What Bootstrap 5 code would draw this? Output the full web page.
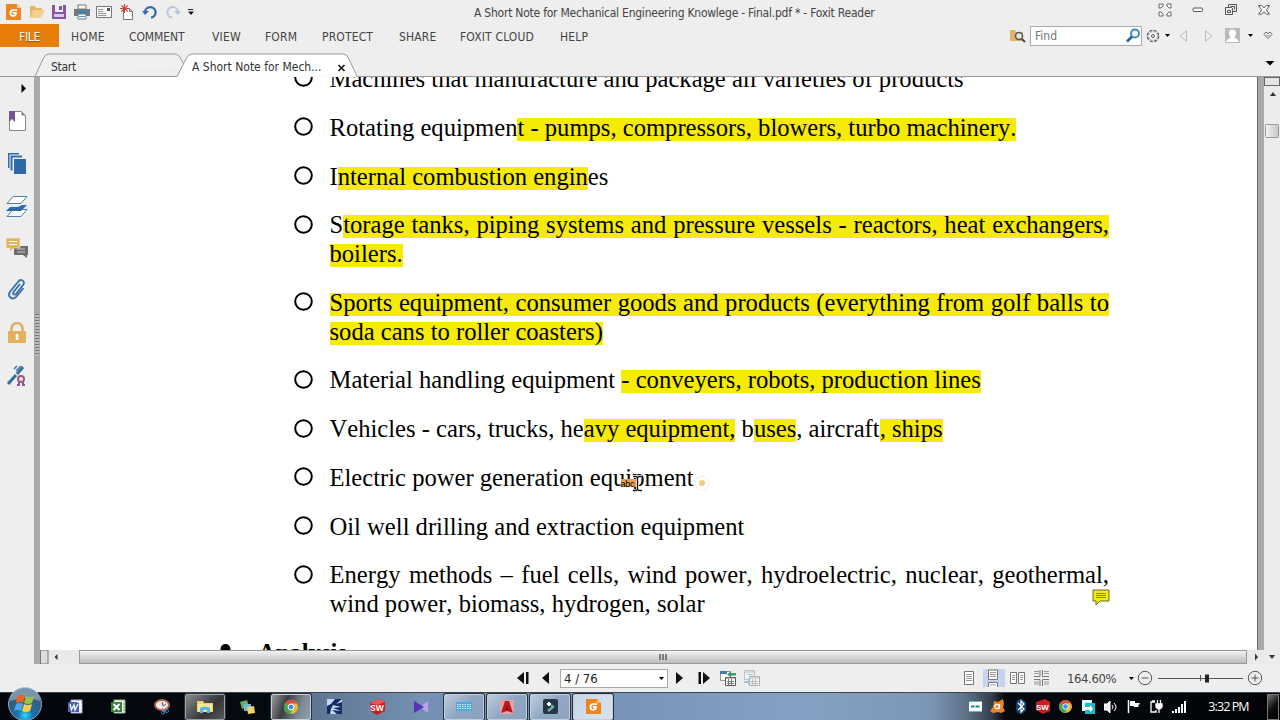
<!DOCTYPE html>
<html lang="en">
<head>
<meta charset="utf-8">
<title>A Short Note for Mechanical Engineering Knowlege - Final.pdf * - Foxit Reader</title>
<link rel="stylesheet" href="https://cdn.jsdelivr.net/npm/bootstrap@5.3.0/dist/css/bootstrap.min.css">
<script src="https://cdn.jsdelivr.net/npm/bootstrap@5.3.0/dist/js/bootstrap.bundle.min.js"></script>
<style>
body{width:1280px;height:720px;background:#eee;font-family:"DejaVu Sans Condensed","DejaVu Sans",sans-serif;font-size:12px;line-height:1;color:#444}
svg{display:block;flex:none}
.titlebar{height:24px}
.quick{width:200px;padding-left:2px}
.quick>span{width:22.75px;display:flex;justify-content:center}
.caption{width:680px;padding-left:274px;font-size:12px;letter-spacing:-.235px;padding-top:1px}
.winbtns{width:138px;gap:17px;padding-left:2px}
.menubar{height:23px;font-size:12px;color:#444}
.file-btn{width:59px;height:23px;background:#e97d0a;color:#fff;text-shadow:0 1px 1px #8a4a00}
.menus a{color:#444;text-decoration:none;white-space:nowrap;letter-spacing:.15px}
.find{width:112px;height:20px;border:1px solid #aaa;background:#fff;color:#777}
.tabrow{height:30px}
.tabtext{white-space:nowrap;color:#333}
.tab1{left:51px;top:14px;letter-spacing:-.3px}.tab2{left:192px;top:14px}
.work{height:587px}
.side{width:34px}
.side svg{margin:0 auto}
.gutter{width:6px;background:#a9a9a9}
.grip{left:1px;top:237px;width:4px;height:42px;background:repeating-linear-gradient(#777 0 1px,#bbb 1px 3px)}
.paper{height:573px;width:1217px;background:#fff;color:#000;font:24.61px/28.7px "Liberation Serif",serif;font-kerning:none}
.edge{width:7px;height:573px;background:#a9a9a9;border-left:1px solid #666}
.vbar{width:16px;background:#ececec}
.points{width:816px;margin:-12.1px 0 0 253px;padding:0;list-style:none}
.points li{display:flex;margin-bottom:20.1px}
.points li>svg{margin:2.500px 15.500px 0 0}
.points li>div{width:779.500px;white-space:nowrap}
.full{text-align-last:justify}
.hl{background:linear-gradient(#f6eb07,#f6eb07) no-repeat 0 4px/100% 23px}
.hbar{height:14px;background:#e9e9e9}
.thumb{border:1px solid #999;background:linear-gradient(#f3f3f3,#dadada 45%,#bcbcbc)}
.stat{height:28px}
.pagebox{width:108px;height:19px;border:1px solid #aaa;background:#fff;color:#222;font-size:13px}
.taskbar{height:28px;border-top:1px solid #3c4652;background:linear-gradient(90deg,#03070c 0,#060b12 285px,#5e7690 312px,#7490b2 420px,#7896bb 640px,#83a2c5 800px,#7c97b6 930px,#5f7489 965px,#343f4c 992px,#05080d 1005px,#020407 1280px)}
.task{width:43.2px;height:27px;display:flex;align-items:center;justify-content:center}
.task>span{width:40px;height:26px;display:flex;align-items:center;justify-content:center}
.task .on{border:1px solid #c5ced8;border-radius:2px;background:linear-gradient(135deg,#ffffff88,#ffffff30 50%,#ffffff25);box-shadow:0 0 0 1px #28323f}
.task .dark{border-color:#9a9da1;background:linear-gradient(135deg,#8b8b8d,#333538 60%,#56595c)}
.task .half{background:linear-gradient(110deg,#9a9a9c,#3c3e41 35%,#7c8794 70%,#8f9eaf)}
.task .front{background:linear-gradient(135deg,#c7d6e8,#d8e3ee)}
.tray>span{width:22.6px;display:flex;justify-content:center}
.clock{color:#fff;font:12.500px "Open Sans",sans-serif;letter-spacing:-.9px}
.peek{width:12px;height:26px;border:1px solid #777;background:linear-gradient(135deg,#777,#111 50%,#000)}
</style>
</head>
<body class="overflow-hidden">
<header>
 <div class="titlebar d-flex align-items-center">
  <div class="quick d-flex align-items-center">
   <span><svg width="15" height="16" viewBox="0 0 15 16"><path d="M0 0h11l4 4v12H0z" fill="#ee8522"/><path d="M11 0v4h4z" fill="#ffd0a0"/><path d="M11 6.200H7.500Q4.500 6.200 4.500 9t2.500 2.800q3 0 3-2.800H7" fill="none" stroke="#fff" stroke-width="1.800"/></svg></span>
   <span style="padding-left:2px"><svg width="16" height="14" viewBox="0 0 16 14"><path d="M1 13V1h5l1 2h6v3" fill="#e4b868"/><path d="M1 13 4 5h12l-4 8z" fill="#f3d08e"/></svg></span>
   <span><svg width="14" height="14" viewBox="0 0 14 14"><path d="M0 0h14v14H0z" fill="#8557a2"/><path d="M3 0h8v7H3z" fill="#eee"/><path d="M7 1h3v4H7z" fill="#8557a2"/><path d="M2 9h10v3H2z" fill="#d9cbe2"/></svg></span>
   <span><svg width="16" height="16" viewBox="0 0 16 16"><path d="M4 1h8v4H4z" fill="#fff" stroke="#777"/><path d="M0 5h16v7H0z" fill="#777"/><path d="M3 7h10v3H3z" fill="#3b84b9"/><path d="M4 10h8v5H4z" fill="#fff" stroke="#777"/><path d="M5 12.500h6" stroke="#5b97c4"/></svg></span>
   <span><svg width="16" height="12" viewBox="0 0 16 12" fill="none"><path d="M.5.500h15v11H.5z" fill="#f7f7f7" stroke="#777"/><path d="M2 3.500h5M2 5.500h5M2 7.500h8M2 9.500h8" stroke="#999"/><path d="M11 2h3v3h-3z" fill="#555"/></svg></span>
   <span><svg width="14" height="16" viewBox="0 0 14 16"><path d="M3.500 4.500h6l3 3v8h-9z" fill="#fff" stroke="#777"/><path d="M9.500 4.500v3h3" fill="none" stroke="#777"/><path d="M4.500 0v9M0 4.500h9M1.300 1.300l6.400 6.400M7.700 1.300 1.300 7.700" stroke="#cf4035" stroke-width="1.200"/></svg></span>
   <span><svg width="16" height="14" viewBox="0 0 16 14"><path d="M3 7a5.300 5.300 0 1 1 6 5.600" fill="none" stroke="#336ba5" stroke-width="2.300"/><path d="M0 6h7L3 10z" fill="#336ba5"/></svg></span>
   <span><svg width="16" height="14" viewBox="0 0 16 14"><path d="M13 7a5.300 5.300 0 1 0-6 5.600" fill="none" stroke="#b6c6d8" stroke-width="2"/><path d="M16 6H9l4 4z" fill="#b6c6d8"/></svg></span>
   <span style="width:13px"><svg width="6" height="6"><path d="M0 .5h5" stroke="#222"/><path d="M0 2.500h6L3 6z" fill="#111"/></svg></span>
  </div>
  <div class="caption text-nowrap">A Short Note for Mechanical Engineering Knowlege - Final.pdf * - Foxit Reader</div>
  <div class="winbtns d-flex align-items-center ms-auto pe-1 pb-1" style="margin-right:-14px">
   <svg width="14" height="14" fill="#fff" stroke="#666"><path d="M1 1h4v2L3 5H1zM9 1h4v4h-2L9 3zM1 9h2l2 2v2H1zM11 9h2v4H9v-2z"/></svg>
   <svg width="12" height="6" style="margin-left:3px"><rect x="1" y="1" width="9.500" height="3.500" rx="1" fill="#fff" stroke="#555"/></svg>
   <svg width="12" height="12" fill="#eee" stroke="#555" style="margin-left:4px"><path d="M3.500.500h8v7h-8z"/><path d="M.5 3.500h7v7h-7z"/><path d="M2.500 6.500h3v2h-3zM5.500 2.500h4v3"/></svg>
   <svg width="12" height="10" style="margin-left:4px" fill="#fff" stroke="#555"><path d="M.700.600h3L6 2.800 8.300.6h3L8.500 4.800l2.800 4.400h-3L6 6.700 3.700 9.200h-3l2.800-4.400z"/></svg>
  </div>
 </div>
 <div class="menubar d-flex align-items-center">
  <div class="file-btn d-flex align-items-center justify-content-center"><span style="margin-top:3px;letter-spacing:-.3px">FILE</span></div>
  <nav class="menus d-flex flex-grow-1" style="padding:3px 0 0 12px">
   <a href="#" style="width:58px;letter-spacing:.3px">HOME</a><a href="#" style="width:83px;letter-spacing:-.1px">COMMENT</a><a href="#" style="width:53px;letter-spacing:.2px">VIEW</a><a href="#" style="width:57px">FORM</a><a href="#" style="width:77px">PROTECT</a><a href="#" style="width:61px">SHARE</a><a href="#" style="width:100px">FOXIT CLOUD</a><a href="#">HELP</a>
  </nav>
  <div class="d-flex align-items-center" style="width:270px">
   <svg width="16" height="15" class="me-1"><path d="M0 2h5l1 2h7v9H0z" fill="#e3b366"/><circle cx="9" cy="8" r="3.500" fill="#e4e9ee" stroke="#555" stroke-width="1.500"/><path d="m12 11 3 3" stroke="#444" stroke-width="2"/></svg>
   <div class="find d-flex align-items-center justify-content-between ps-1"><span>Find</span><svg width="15" height="15"><circle cx="9" cy="5.500" r="4" fill="#f4faff" stroke="#3684b5" stroke-width="1.800"/><path d="m6 8.500-5 5" stroke="#2b5d92" stroke-width="2.500"/></svg></div>
   <svg width="14" height="14" viewBox="0 0 14 14" style="margin-left:4px" fill="none" stroke="#555"><circle cx="7" cy="7" r="5.600" fill="#f8f8f8" stroke-width="1.300" stroke-dasharray="3 1.400"/><circle cx="7" cy="7" r="4.300" stroke="#999" stroke-width=".6"/><circle cx="7" cy="7" r="1.500"/></svg>
   <svg width="5" height="3" style="margin-left:5px"><path d="M0 0h5L2.500 3z"/></svg>
   <svg width="8" height="12" style="margin-left:9px"><path d="M7.500.8v10.400L1 6z" fill="#eee" stroke="#bbb"/></svg>
   <svg width="8" height="12" style="margin-left:18px"><path d="M.5.800v10.400L7 6z" fill="#eee" stroke="#bbb"/></svg>
   <svg width="15" height="15" style="margin-left:12px"><path d="M0 0h15v15H0z" fill="#bbb"/><path d="M1 14q1-3 5-4.500Q4 8 4 5q0-3.500 3.500-3.500T11 5q0 3-2 4.500 4 1.500 5 4.500z" fill="#fff"/></svg>
   <svg width="5" height="3" style="margin-left:8px"><path d="M0 0h5L2.500 3z"/></svg>
   <svg width="10" height="9" style="margin-left:10px"><path d="M5 7.500 1 3.500 3 1l2 1.600L7 1l2 2.500z" fill="#fff" stroke="#666"/><path d="m3 3.500 2 1.800 2-1.800" fill="none" stroke="#666" stroke-width=".8"/></svg>
  </div>
 </div>
 <div class="tabrow position-relative">
  <svg width="1280" height="30"><path d="M0 29.500h35L43 12q2-5 6-5h125q5 0 7 5l4 8" fill="#f0f0f0" stroke="#999"/><path d="M176 30l1-.5 9-17.500q2-5 6-5h151q4 0 6 5l8 17.500" fill="#fff" stroke="#999"/><path d="M35 29.500h142M357 29.500h923" stroke="#999"/><path d="m338.500 18 6 6m0-6-6 6" stroke="#111" stroke-width="1.600"/><path d="M1265.500 14h9l-4.500 4.500z"/></svg>
  <span class="tabtext tab1 position-absolute">Start</span>
  <span class="tabtext tab2 position-absolute">A Short Note for Mech...</span>
 </div>
</header>
<main class="work d-flex">
 <aside class="side d-flex flex-column">
  <svg width="34" height="9" style="margin-top:7px"><path d="M21.500 0v9l4.500-4.500z"/></svg>
  <svg width="17" height="20" style="margin-top:18px"><path d="M.5.500h12l4 4v15H.5z" fill="#fff" stroke="#888"/><path d="M12.500.5v4h4" fill="#888"/><path d="M0 0h6v11L3 8l-3 3z" fill="#76528f"/></svg>
  <svg width="18" height="21" style="margin-top:22px"><path d="M.5 15V.5H11M3.500 17.500v-14H14" fill="none" stroke="#336da8" stroke-width="2"/><path d="M6 6h12v15H6z" fill="#2e6aa8"/></svg>
  <svg width="22" height="21" style="margin-top:22px"><path d="M7 .5h14l-6 7H1zM7 13.500h14l-6 7H1z" fill="#fff" stroke="#4c7fae"/><path d="M0 15l4-4h8l4-2h5l-6 6z" fill="#2e6aa8"/></svg>
  <svg width="22" height="20" style="margin-top:21px"><path d="M8 8h14v9h-1v3l-4-3H8z" fill="#6d6d6d"/><path d="M11 11h8M11 14h8" stroke="#ccc"/><path d="M0 0h14v10H8l-4 4v-4H0z" fill="#e4b263" stroke="#eee" stroke-width=".6"/><path d="M3 3.500h8M3 6.500h8" stroke="#fff"/></svg>
  <svg width="18" height="21" viewBox="0 0 18 21" style="margin-top:21px"><path d="M12 5 5.500 13q-1 2 .5 2.500t2.500-1L15 6q2-3-.5-4.500T10 3L2.500 12q-3 4 0 6.500t6-1L15.500 9" fill="none" stroke="#3973aa" stroke-width="1.900"/></svg>
  <svg width="18" height="21" style="margin-top:22px"><path d="M3.500 10V6.500a5.500 5.500 0 0 1 11 0V10" fill="none" stroke="#e0ae5c" stroke-width="2.600"/><rect y="9" width="18" height="12" rx="1" fill="#e3b05e"/><path d="M9 12v6" stroke="#fff" stroke-width="2.500"/></svg>
  <svg width="20" height="21" style="margin-top:22px"><path d="m1 19 8-9M10 9l6-7" stroke="#346ca5" stroke-width="3"/><path d="m7 4 3-3M9 6l5-5" stroke="#346ca5" stroke-width="1.300"/><circle cx="14" cy="14" r="3" fill="none" stroke="#a05880" stroke-width="2"/><path d="M12 16v4h-2m6-4v4h2" fill="none" stroke="#8c589b" stroke-width="2"/></svg>
 </aside>
 <div class="gutter position-relative"><div class="grip position-absolute"></div></div>
 <section>
  <div class="d-flex">
   <article class="paper overflow-hidden position-relative">
    <ul class="points">
     <li><svg width="21" height="21"><circle cx="10.500" cy="10.500" r="8.300" fill="none" stroke="#000" stroke-width="2"/></svg><div>Machines that manufacture and package all varieties of products</div></li>
     <li><svg width="21" height="21"><circle cx="10.500" cy="10.500" r="8.300" fill="none" stroke="#000" stroke-width="2"/></svg><div>Rotating equipmen<span class="hl">t - pumps, compressors, blowers, turbo machinery.</span></div></li>
     <li><svg width="21" height="21"><circle cx="10.500" cy="10.500" r="8.300" fill="none" stroke="#000" stroke-width="2"/></svg><div>I<span class="hl">nternal combustion engin</span>es</div></li>
     <li><svg width="21" height="21"><circle cx="10.500" cy="10.500" r="8.300" fill="none" stroke="#000" stroke-width="2"/></svg><div class="full">S<span class="hl">torage tanks, piping systems and pressure vessels - reactors, heat exchangers,</span><div style="text-align-last:left"><span class="hl">boilers.</span></div></div></li>
     <li><svg width="21" height="21"><circle cx="10.500" cy="10.500" r="8.300" fill="none" stroke="#000" stroke-width="2"/></svg><div class="full"><span class="hl">Sports equipment, consumer goods and products (everything from golf balls to</span><div style="text-align-last:left"><span class="hl">soda cans to roller coasters)</span></div></div></li>
     <li><svg width="21" height="21"><circle cx="10.500" cy="10.500" r="8.300" fill="none" stroke="#000" stroke-width="2"/></svg><div>Material handling equipment <span class="hl">- conveyers, robots, production lines</span></div></li>
     <li><svg width="21" height="21"><circle cx="10.500" cy="10.500" r="8.300" fill="none" stroke="#000" stroke-width="2"/></svg><div>Vehicles - cars, trucks, he<span class="hl">avy equipment,</span> b<span class="hl">uses</span>, aircraft<span class="hl">, ships</span></div></li>
     <li><svg width="21" height="21"><circle cx="10.500" cy="10.500" r="8.300" fill="none" stroke="#000" stroke-width="2"/></svg><div>Electric power generation equipment</div></li>
     <li><svg width="21" height="21"><circle cx="10.500" cy="10.500" r="8.300" fill="none" stroke="#000" stroke-width="2"/></svg><div>Oil well drilling and extraction equipment</div></li>
     <li><svg width="21" height="21"><circle cx="10.500" cy="10.500" r="8.300" fill="none" stroke="#000" stroke-width="2"/></svg><div class="full">Energy methods – fuel cells, wind power, hydroelectric, nuclear, geothermal,<div style="text-align-last:left">wind power, biomass, hydrogen, solar</div></div></li>
    </ul>
    <div class="d-flex fw-bold" style="margin:4px 0 0 180px"><svg width="38" height="28"><circle cx="5.500" cy="10" r="5"/></svg><span>Analysis</span></div>
    <!-- comment markers and text cursor over the page -->
    <svg class="position-absolute" style="left:579px;top:396px" width="92" height="22"><rect x="2" y="6" width="15" height="8" fill="#e5a052"/><text x="1.500" y="13.500" font-family="Liberation Sans,sans-serif" font-size="9" textLength="14">abc</text><path d="M14 3.500h3l1.500 1 1.500-1h3M18.500 4.500v12M14 17.500h3l1.500-1 1.500 1h3" fill="none" stroke="#fff" stroke-width="3"/><path d="M14 3.500h3l1.500 1 1.500-1h3M18.500 4.500v12M14 17.500h3l1.500-1 1.500 1h3" fill="none" stroke="#111" stroke-width="1.400"/><circle cx="83" cy="10" r="7" fill="none" stroke="#f8edcf"/><circle cx="83" cy="10" r="3" fill="#f2ca87"/></svg>
    <svg class="position-absolute" style="left:1052px;top:512px" width="18" height="17"><path d="M1 1h16v11H8l-4 4v-4H1z" fill="#f4e817" stroke="#6d6a25"/><path d="M4 4.500h10M4 6.500h10M4 8.500h10" stroke="#918b22"/></svg>
   </article>
   <div class="edge"></div>
  </div>
  <div class="hbar d-flex">
   <svg width="40" height="14"><rect x=".5" y="0" width="7.500" height="14" fill="#ddd" stroke="#777"/><path d="M17.500 4v6L14.500 7z" fill="#333"/></svg>
   <div class="thumb d-flex align-items-center justify-content-center" style="width:1168px;margin-left:-1px"><svg width="8" height="7"><path d="M1 0v6M4 0v6M7 0v6" stroke="#555" stroke-width="1.400"/></svg></div>
   <svg width="17" height="14"><path d="M8 3.500v7L11 7z" fill="#333"/></svg>
  </div>
 </section>
 <div class="vbar"><svg width="16" height="587"><rect x=".5" y=".5" width="15" height="8" fill="#e4e4e4" stroke="#666"/><path d="m6 19 3-4 3 4z" fill="#333"/><defs><linearGradient id="tg"><stop stop-color="#f5f5f5"/><stop offset="1" stop-color="#c6c6c6"/></linearGradient></defs><rect x="1.500" y="47.500" width="13" height="13" rx="1" fill="url(#tg)" stroke="#999"/><path d="m5 578 3 4 3-4z" fill="#333"/></svg></div>
</main>
<footer>
 <div class="stat d-flex align-items-center">
  <svg width="12" height="12" style="margin-left:517px"><path d="M7 0v12L0 6zM9 0h2.500v12H9z" fill="#111"/></svg>
  <svg width="7" height="12" style="margin-left:13px"><path d="M7 0v12L0 6z" fill="#111"/></svg>
  <div class="pagebox d-flex align-items-center justify-content-between" style="margin-left:11px;padding:0 3px"><span>4 / 76</span><svg width="5" height="3"><path d="M0 0h5L2.500 3z"/></svg></div>
  <svg width="7" height="12" style="margin-left:8px"><path d="M0 0v12l7-6z" fill="#111"/></svg>
  <svg width="12" height="12" style="margin-left:15px"><path d="M5 0v12l7-6zM.5 0H3v12H.5z" fill="#111"/></svg>
  <svg width="16" height="16" style="margin-left:10px"><path d="M.5 1.500h10v9H.5z" fill="#fff" stroke="#999"/><path d="M0 1h7v3H0z" fill="#467aa7"/><path d="M5.500 7.500h10v8h-10z" fill="#fff" stroke="#555"/><path d="M5 8h10M7 11.500h7M7 13.500h7M8.500 9v6M11.500 9v6" stroke="#777"/><path d="M7 4.500 11 1v2h5v2.500h-5v2z" fill="#3f9a75"/></svg>
  <svg width="16" height="16" style="margin-left:8px" opacity=".4"><path d="M.5.500h10v9H.5z" fill="#fff" stroke="#667f99"/><path d="M1 2h9M3 4.500h6" stroke="#467aa7"/><path d="M5.500 6.500h10v9h-10z" fill="#fff" stroke="#555"/><path d="M6 8h9M7 11.500h7M7 13.500h7M8.500 9v6M11.500 9v6" stroke="#777"/><path d="M0 11h4V9l3 3-3 3v-2H0z" fill="#467aa7"/></svg>
  <div class="d-flex align-items-center" style="margin-left:203px">
   <svg width="12" height="14"><path d="M1.500.500h9v13h-9z" fill="#fff" stroke="#777"/><path d="M3 3.500h6M3 5.500h6M3 7.500h6M3 9.500h6" stroke="#999"/></svg>
   <svg width="22" height="18" style="margin-left:8px"><path d="M0 0h22v18H0z" fill="#c5d3ee"/><path d="M5.500 1v9.500h9V1zM5.500 18v-4.500h9V18" fill="#fff" stroke="#777"/><path d="M7 3.500h6M7 5.500h6M7 7.500h6M7 16h6" stroke="#999"/></svg>
   <svg width="15" height="14" style="margin-left:5px"><path d="M.5 1.500h6v11h-6zM8.500 1.500h6v11h-6z" fill="#fff" stroke="#777"/><path d="M2 4.500h3M2 6.500h3M2 8.500h3M10 4.500h3M10 6.500h3M10 8.500h3" stroke="#999"/></svg>
   <svg width="15" height="16" style="margin-left:9px"><path d="M0 6.500h6V0M8.500 0v6.500h6.500M0 9.500h6V16M8.500 16V9.500H15" fill="none" stroke="#777"/><path d="M0 1.500h5M0 3.500h5M10 1.500h5M10 3.500h5M0 12h5M10 12h5M0 14h5M10 14h5" stroke="#999"/></svg>
   <span style="margin-left:18px;width:62px;font-size:13px;letter-spacing:-.4px">164.60%</span>
   <svg width="5" height="3"><path d="M0 0h5L2.500 3z"/></svg>
   <svg width="130" height="16" style="margin-left:3px" fill="none" stroke="#555"><circle cx="8" cy="8" r="6.700"/><path d="M4.500 8h7M21 8.500h85M63.500 5v6"/><path d="M68 4.500h4v8h-4z" fill="#222" stroke="none"/><circle cx="118" cy="8" r="6.700"/><path d="M114.500 8h7M118 4.500v7"/></svg>
  </div>
 </div>
 <div class="taskbar d-flex align-items-center position-relative">
  <svg class="position-absolute" style="left:7px;top:-7px" width="36" height="36"><defs><radialGradient id="orb" cy=".85"><stop stop-color="#36d7fa"/><stop offset=".45" stop-color="#1672ae"/><stop offset="1" stop-color="#355f80"/></radialGradient></defs><circle cx="18" cy="18" r="16.500" fill="url(#orb)" stroke="#8aa8bd"/><path d="M3 15a15 15 0 0 1 30 0q-15-6-30 0" fill="#ffffff55"/><path d="M10 10q4-2 8 0l-2 7q-3-2-7 0z" fill="#e7632b"/><path d="M19 10q4 2 8 0l-2 7q-4 2-8 0z" fill="#98c34b"/><path d="M9 18q4-2 7 0l-2 7q-3-2-7 0z" fill="#4ca7e2"/><path d="M17 18q4 2 8 0l-2 7q-4 2-8 0z" fill="#f7cd42"/></svg>
  <div class="d-flex" style="margin-left:53.6px">
   <div class="task"><svg width="15" height="15"><path d="M3 1h11v13H3z" fill="#f4f5ff" stroke="#9ba5d9"/><path d="M0 3h11v10H0z" fill="#4d5db0"/><path d="m2 5 1.500 6L6 6l1 5 3-6M9 3h4M12 6h2M12 9h2" fill="none" stroke="#fff" stroke-width="1.300"/></svg></div>
   <div class="task"><svg width="15" height="15"><path d="M3 1h11v13H3z" fill="#eef8ec" stroke="#8bb78b"/><path d="M0 3h11v10H0z" fill="#37833e"/><path d="m2.500 5 6 6m0-6-6 6" stroke="#fff" stroke-width="1.800"/><path d="M12 5h2M12 8h2M12 11h2" stroke="#5a9d5c"/></svg></div>
   <div class="task"><svg width="16" height="16"><ellipse cx="8" cy="6" rx="7" ry="5" fill="#eee" stroke="#b9634b" stroke-width="2"/><path d="m8 3 1 4 3-2" fill="none" stroke="#555"/><path d="m8 9 3 5M12 9l-2 5" stroke="#999"/><circle cx="9" cy="13.500" r="1.500" fill="none" stroke="#3086c5"/><circle cx="13" cy="12" r="1.500" fill="none" stroke="#3086c5"/></svg></div>
   <div class="task"><span class="on dark"><svg width="16" height="15"><path d="M0 2h6l1 2h9v9H0z" fill="#ecd36b"/><path d="M1 5h14v7H1z" fill="#f6e697"/><path d="M3 14V9q5-3 10 0v5h-3v-3H6v3z" fill="#58b7df"/></svg></span></div>
   <div class="task"><svg width="16" height="16"><path d="m0 3 7-2 2 7-7 2z" fill="#64ad6d"/><path d="M4 5h7v7H4z" fill="#74b8d1"/><path d="m7 8 7-1 1 7-7 1z" fill="#ecd568"/></svg></div>
   <div class="task"><span class="on half"><svg width="14" height="14" viewBox="0 0 14 14"><circle cx="7" cy="7" r="7" fill="#e9bb32"/><path d="M7 7 .900 3.500A7 7 0 0 1 13 3.500H7z" fill="#df4b3d"/><path d="M.9 3.500A7 7 0 0 0 6.500 14L9 8z" fill="#3fa553"/><circle cx="7" cy="7" r="3" fill="#4b8bed" stroke="#fff"/></svg></span></div>
   <div class="task"><svg width="15" height="15"><path d="M0 0h15v15H0z" fill="#142a6b"/><path d="M0 0h8L4 5 0 7zM6 6l8 2-8 1 8 3-9-1 5 4H3l1-5zM9 5l6-5v3z" fill="#c7d7ee"/></svg></div>
   <div class="task"><svg width="17" height="16"><path d="m1 4 9-4 6 3v9l-8 4-7-4z" fill="#c71e22"/><path d="m1 4 9-4 6 3-8 3z" fill="#e55a56"/><text x="1" y="12" font-family="Liberation Sans,sans-serif" font-size="8.500" font-weight="bold" fill="#fff">SW</text></svg></div>
   <div class="task"><svg width="14" height="12"><path d="m14 0v12L6 6z" fill="#b9a1ec"/><path d="M0 0v12l10-6z" fill="#5934ba"/></svg></div>
   <div class="task"><span class="on"><svg width="16" height="9"><path d="M0 0h16v9H0z" fill="#4fa8df"/><path d="M1 2.500h14M1 4.500h14M1 6.500h14" stroke="#d8efff" stroke-dasharray="1.500 1"/></svg></span></div>
   <div class="task"><span class="on"><svg width="14" height="14"><path d="M0 0h14v14H0z" fill="#e3a5a4"/><path d="M5 1h4l4 12-6-2-6 2z" fill="#bd1720"/><path d="m7 6 1.500 4h-3z" fill="#641319"/></svg></span></div>
   <div class="task"><span class="on"><svg width="15" height="15"><rect width="15" height="15" rx="2" fill="#243744"/><path d="M6 3v4M4 5h4" stroke="#fff" stroke-width="2"/><path d="m5 12 5-4-2-2" fill="none" stroke="#65b7a7" stroke-width="2.300"/></svg></span></div>
   <div class="task"><span class="on front"><svg width="15" height="15"><path d="M0 0h11l4 4v11H0z" fill="#ee8522"/><path d="M11 0v4h4z" fill="#f9b677"/><path d="M11 5.200H7.500Q4.500 5.200 4.500 8t2.500 2.800q3 0 3-2.800H7" fill="none" stroke="#fff" stroke-width="1.800"/></svg></span></div>
  </div>
  <div class="tray d-flex align-items-center ms-auto">
   <span><svg width="13" height="11"><path d="M0 0h13v11H0z" fill="#f7ffff"/><path d="M0 .5h13M0 10.500h13" stroke="#62bcb6"/><path d="M2 5.500h9" stroke="#277f84" stroke-width="2" stroke-dasharray="3 .5 1 .5"/></svg></span>
   <span><svg width="15" height="15"><path d="m4 2 4 1 5-3 1 5-1 3 2 4-4 2-3-1-5 1-3-2 3-4z" fill="#ee8021"/><circle cx="7" cy="7.500" r="2.200" fill="none" stroke="#fff" stroke-width="1.300"/><path d="M9.500 5v5" stroke="#fff" stroke-width="1.300"/></svg></span>
   <span><svg width="10" height="15"><rect width="10" height="15" rx="5" fill="#104078"/><path d="m2 4 6 6-3 3V2l3 3-6 6" fill="none" stroke="#fff" stroke-width="1.200"/></svg></span>
   <span><svg width="16" height="15"><path d="m1 3 9-3 5 3v9l-7 3-7-4z" fill="#c71e22"/><text x="1" y="11" font-family="Liberation Sans,sans-serif" font-size="8" font-weight="bold" fill="#fff">SW</text></svg></span>
   <span><svg width="13" height="13" viewBox="0 0 14 14"><circle cx="7" cy="7" r="7" fill="#e9bb32"/><path d="M7 7 .900 3.500A7 7 0 0 1 13 3.500H7z" fill="#df4b3d"/><path d="M.9 3.500A7 7 0 0 0 6.500 14L9 8z" fill="#3fa553"/><circle cx="7" cy="7" r="3" fill="#4b8bed" stroke="#fff"/></svg></span>
   <span><svg width="13" height="14"><path d="M0 0h10v11H0z" fill="#dff9fa"/><path d="M3 3h10v11H3z" fill="#25b6c4"/><path d="M3 7h5V5l3 4-3 3v-2H3z" fill="#fff"/></svg></span>
   <span><svg width="14" height="14" fill="none" stroke="#fff"><path d="M0 4h3l3-3v12l-3-3H0z" fill="#eee"/><path d="M8 5q2 2 0 4M10 3q4 4 0 8"/></svg></span>
   <span><svg width="14" height="13"><path d="M1.500 0v13" stroke="#fff" stroke-width="1.500"/><path d="M3 1h5v2h5l-2 3 1 1H7V6H3z" fill="#fff"/></svg></span>
   <span><svg width="14" height="15" fill="none" stroke="#fff" stroke-width="1.300"><path d="M6 3H2v10h5v-2M3 2h3"/><path d="M7 5h6v3q-3 4-6 0zM8.500 1v4M11.500 1v4M10 9v5" fill="#fff"/></svg></span>
   <span><svg width="14" height="12" fill="#fff"><path d="M0 10h2v2H0zM3 8h2v4H3zM6 6h2v6H6zM9 3h2v9H9zM12 0h2v12h-2z"/></svg></span>
  </div>
  <div class="clock text-nowrap text-center" style="width:77px">3:32 PM</div>
  <div class="peek" style="margin-right:1px"></div>
 </div>
</footer>
</body>
</html>
